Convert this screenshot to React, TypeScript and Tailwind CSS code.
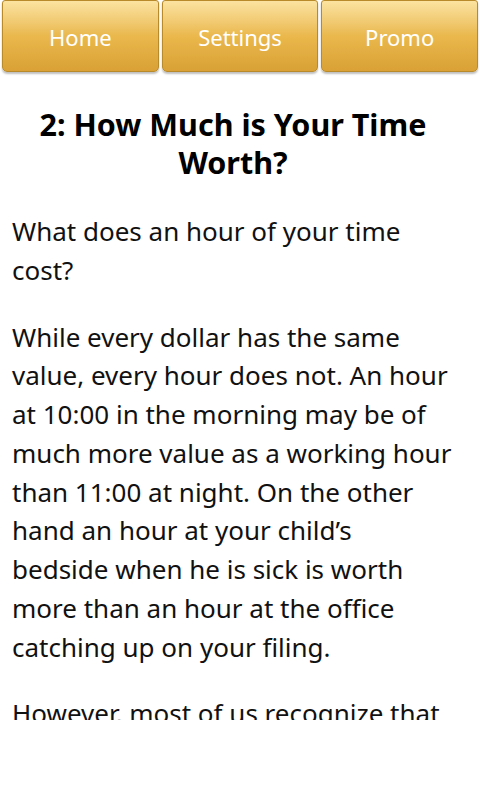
const tabs = ["Home", "Settings", "Promo"];

const paragraphs = [
  "What does an hour of your time cost?",
  "While every dollar has the same value, every hour does not. An hour at 10:00 in the morning may be of much more value as a working hour than 11:00 at night. On the other hand an hour at your child\u2019s bedside when he is sick is worth more than an hour at the office catching up on your filing.",
  "However, most of us recognize that some hours are worth more than others, and we should plan our days accordingly.",
];

export default function App() {
  return (
    <div
      className="flex h-[800px] w-[480px] flex-col bg-white"
      style={{ fontFamily: '"Noto Sans", "Open Sans", sans-serif' }}
    >
      {/* Top tab bar */}
      <div className="flex gap-[3px] px-[2px] pb-[2px]">
        {tabs.map((t) => (
          <button
            key={t}
            className="flex h-[72px] flex-1 items-center justify-center rounded-b-[5px] rounded-t-[3px] border border-[#b98a2a] bg-gradient-to-b from-[#fbe3a0] via-[#eab84c] to-[#d9a136] pt-[2px] text-[22px] text-white shadow-[0_2px_2px_rgba(0,0,0,0.25)]"
          >
            {t}
          </button>
        ))}
      </div>

      {/* Scroll content */}
      <div className="h-[646px] overflow-hidden pl-[12px] pr-[26px]">
        <h1 className="mt-[31px] text-center text-[30.5px] font-bold leading-[38px] text-black">
          2: How Much is Your Time Worth?
        </h1>
        {paragraphs.map((p, i) => (
          <p
            key={i}
            className={`${i === 0 ? "mt-[31px]" : "mt-[28px]"} text-[26px] leading-[38.75px] text-[#111]`}
          >
            {p}
          </p>
        ))}
      </div>
    </div>
  );
}
